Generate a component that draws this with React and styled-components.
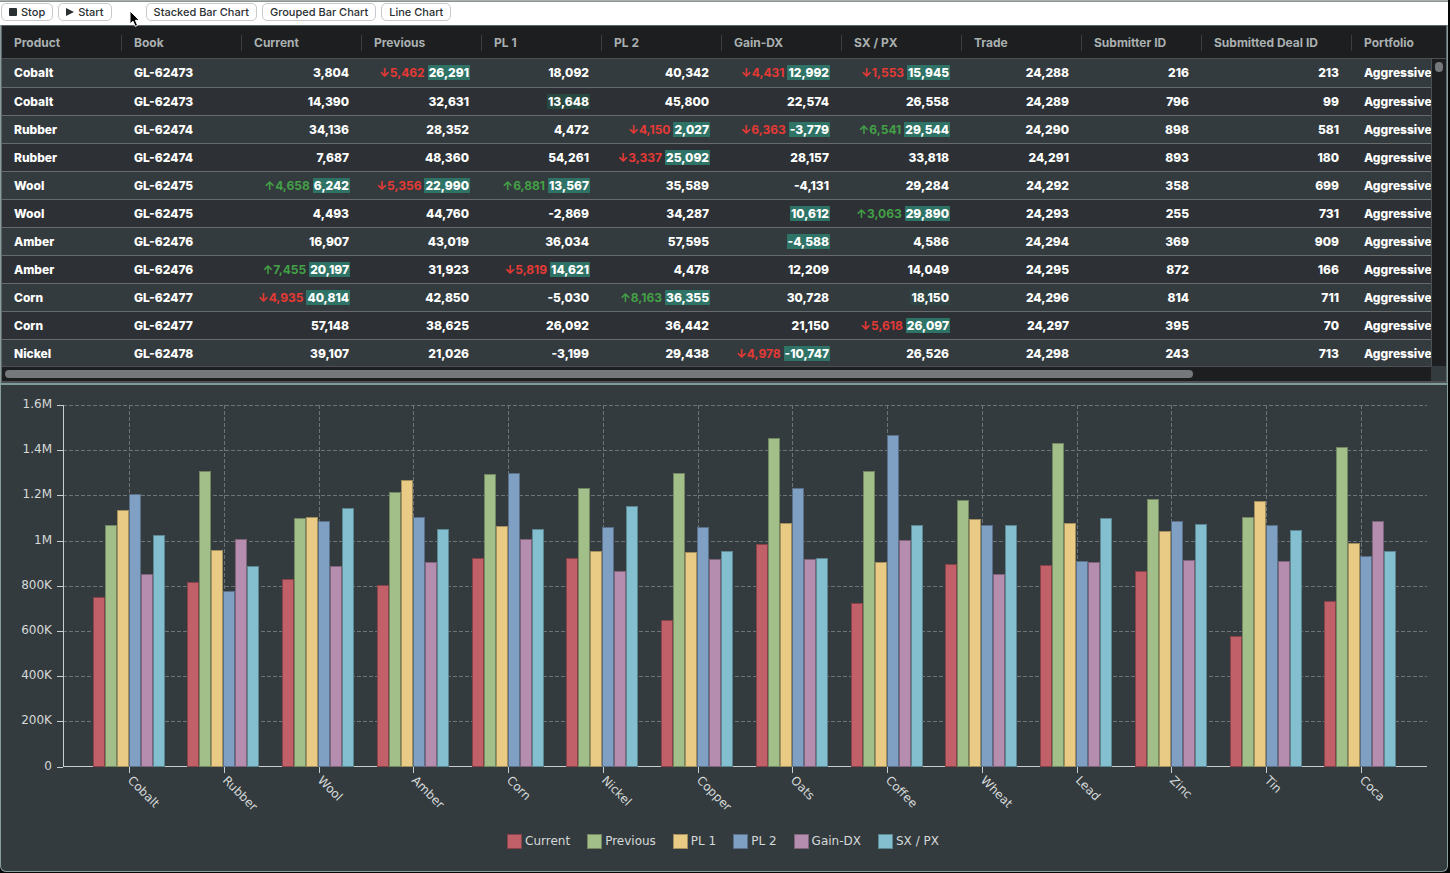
import React from 'react';
import styled, { createGlobalStyle } from 'styled-components';

const columns = [
  { name: 'Product', width: 120 },
  { name: 'Book', width: 120 },
  { name: 'Current', width: 120 },
  { name: 'Previous', width: 120 },
  { name: 'PL 1', width: 120 },
  { name: 'PL 2', width: 120 },
  { name: 'Gain-DX', width: 120 },
  { name: 'SX / PX', width: 120 },
  { name: 'Trade', width: 120 },
  { name: 'Submitter ID', width: 120 },
  { name: 'Submitted Deal ID', width: 150 },
  { name: 'Portfolio', width: 120 },
];

// A number cell is either a plain value or [value, delta, flash].
const rows = [
  ['Cobalt', 'GL-62473', 3804, [26291, -5462, 'on'], 18092, 40342, [12992, -4431, 'on'], [15945, -1553, 'on'], 24288, 216, 213],
  ['Cobalt', 'GL-62473', 14390, 32631, [13648, 0, 'fading'], 45800, 22574, 26558, 24289, 796, 99],
  ['Rubber', 'GL-62474', 34136, 28352, 4472, [2027, -4150, 'on'], [-3779, -6363, 'on'], [29544, 6541, 'on'], 24290, 898, 581],
  ['Rubber', 'GL-62474', 7687, 48360, 54261, [25092, -3337, 'on'], 28157, 33818, 24291, 893, 180],
  ['Wool', 'GL-62475', [6242, 4658, 'on'], [22990, -5356, 'on'], [13567, 6881, 'on'], 35589, -4131, 29284, 24292, 358, 699],
  ['Wool', 'GL-62475', 4493, 44760, -2869, 34287, [10612, 0, 'on'], [29890, 3063, 'on'], 24293, 255, 731],
  ['Amber', 'GL-62476', 16907, 43019, 36034, 57595, [-4588, 0, 'on'], 4586, 24294, 369, 909],
  ['Amber', 'GL-62476', [20197, 7455, 'on'], 31923, [14621, -5819, 'on'], 4478, 12209, 14049, 24295, 872, 166],
  ['Corn', 'GL-62477', [40814, -4935, 'on'], 42850, -5030, [36355, 8163, 'on'], 30728, [18150, 0, 'faded'], 24296, 814, 711],
  ['Corn', 'GL-62477', 57148, 38625, 26092, 36442, 21150, [26097, -5618, 'on'], 24297, 395, 70],
  ['Nickel', 'GL-62478', 39107, 21026, -3199, 29438, [-10747, -4978, 'on'], 26526, 24298, 243, 713],
];

const series = [
  { name: 'Current', fill: '#c16068', stroke: '#87434a' },
  { name: 'Previous', fill: '#a2bf8a', stroke: '#718661' },
  { name: 'PL 1', fill: '#e9cb85', stroke: '#a38e5d' },
  { name: 'PL 2', fill: '#80a0c3', stroke: '#5a7089' },
  { name: 'Gain-DX', fill: '#b58dae', stroke: '#7f637a' },
  { name: 'SX / PX', fill: '#84bfd0', stroke: '#5c8692' },
];

// Totals in thousands, in the order of the series.
const totals = [
  ['Cobalt', [753, 1073, 1139, 1210, 855, 1028]],
  ['Rubber', [820, 1312, 962, 780, 1010, 891]],
  ['Wool', [833, 1104, 1108, 1090, 891, 1148]],
  ['Amber', [807, 1219, 1272, 1108, 909, 1055]],
  ['Corn', [926, 1299, 1068, 1303, 1010, 1055]],
  ['Nickel', [926, 1237, 957, 1064, 869, 1157]],
  ['Copper', [652, 1303, 953, 1064, 922, 957]],
  ['Oats', [988, 1458, 1081, 1237, 922, 926]],
  ['Coffee', [727, 1312, 909, 1471, 1006, 1073]],
  ['Wheat', [900, 1183, 1099, 1073, 855, 1073]],
  ['Lead', [895, 1436, 1081, 913, 909, 1104]],
  ['Zinc', [869, 1188, 1046, 1090, 917, 1077]],
  ['Tin', [581, 1108, 1179, 1073, 913, 1050]],
  ['Coca', [736, 1418, 993, 935, 1090, 957]],
];

const yTicks = [
  [0, '0'],
  [200, '200K'],
  [400, '400K'],
  [600, '600K'],
  [800, '800K'],
  [1000, '1M'],
  [1200, '1.2M'],
  [1400, '1.4M'],
  [1600, '1.6M'],
];

const format = n => n.toLocaleString('en-US');

const NumberCell = ({ cell }) => {
  const [value, delta, flash] = Array.isArray(cell) ? cell : [cell, 0, 'off'];
  return (
    <Cell $right>
      {delta !== 0 && (
        <Delta $up={delta > 0}>
          {delta > 0 ? '↑' : '↓'}
          {format(Math.abs(delta))}
        </Delta>
      )}
      <Value $flash={flash}>{format(value)}</Value>
    </Cell>
  );
};

const Grid = () => (
  <GridPanel>
    <TableArea>
      <Table>
        <colgroup>
          {columns.map(c => <col key={c.name} style={{ width: c.width }} />)}
        </colgroup>
        <thead>
          <tr>
            {columns.map(c => (
              <HeaderCell key={c.name} scope="col">
                <HeaderLabel>{c.name}</HeaderLabel>
              </HeaderCell>
            ))}
          </tr>
        </thead>
        <tbody>
          {rows.map(([product, book, ...numbers]) => (
            <Row key={numbers[6]}>
              <Cell>{product}</Cell>
              <Cell>{book}</Cell>
              {numbers.map((n, i) => <NumberCell key={i} cell={n} />)}
              <Cell>Aggressive</Cell>
            </Row>
          ))}
        </tbody>
      </Table>
    </TableArea>
    <VerticalTrack><VerticalThumb /></VerticalTrack>
    <HorizontalTrack><HorizontalThumb /></HorizontalTrack>
  </GridPanel>
);

const LEFT = 62;
const RIGHT = 1426;
const BASE = 382;
const BAR = 12;
const EDGE = 66;
const STEP = 94.76;

const scaleY = v => BASE - 0.3 - (v * 361.7) / 1600;
const scaleX = i => LEFT + EDGE + i * STEP;
const yOf = v => Math.round(scaleY(v));
const xOf = i => Math.round(scaleX(i));

const BarChart = () => (
  <Plot viewBox="0 0 1446 440" role="img" aria-label="Totals by product">
    <g stroke="#6e7476" strokeDasharray="4 2" shapeRendering="crispEdges">
      {yTicks.slice(1).map(([v]) => (
        <line key={v} x1={LEFT} x2={RIGHT} y1={yOf(v) + 0.5} y2={yOf(v) + 0.5} />
      ))}
      {totals.map(([name], i) => (
        <line key={name} x1={xOf(i) + 0.5} x2={xOf(i) + 0.5} y1={yOf(1600)} y2={BASE} />
      ))}
    </g>
    <g stroke="#c9cdcd" shapeRendering="crispEdges">
      <line x1={LEFT + 0.5} x2={LEFT + 0.5} y1={yOf(1600)} y2={BASE} />
      <line x1={LEFT} x2={RIGHT} y1={BASE - 0.5} y2={BASE - 0.5} />
      {yTicks.map(([v]) => (
        <line key={v} x1={LEFT - 6} x2={LEFT} y1={yOf(v) + 0.5} y2={yOf(v) + 0.5} />
      ))}
      {totals.map(([name], i) => (
        <line key={name} x1={xOf(i) + 0.5} x2={xOf(i) + 0.5} y1={BASE} y2={BASE + 6} />
      ))}
    </g>
    {totals.map(([name, values], i) => (
      <g key={name} shapeRendering="crispEdges">
        {values.map((v, j) => {
          const top = Math.ceil(scaleY(v));
          return (
            <rect
              key={series[j].name}
              x={Math.floor(scaleX(i)) - 36 + j * BAR + 0.5}
              y={top + 0.5}
              width={BAR - 1}
              height={BASE - top - 1}
              fill={series[j].fill}
              stroke={series[j].stroke}
            />
          );
        })}
      </g>
    ))}
    {yTicks.map(([v, label]) => (
      <AxisLabel key={v} x={LEFT - 11} y={yOf(v) + 3} textAnchor="end">{label}</AxisLabel>
    ))}
    {totals.map(([name], i) => (
      <AxisLabel key={name} transform={`translate(${xOf(i) - 2} ${BASE + 14}) rotate(45)`}>{name}</AxisLabel>
    ))}
  </Plot>
);

const App = () => {
  return (
    <>
      <GlobalStyle />
      <Frame>
        <TitleEdge />
        <Toolbar>
          <ToolButton type="button">
            <Glyph viewBox="0 0 9 9" aria-hidden="true"><rect x="0" y="0" width="9" height="9" rx="1" /></Glyph>
            Stop
          </ToolButton>
          <ToolButton type="button">
            <Glyph viewBox="0 0 9 9" aria-hidden="true"><path d="M0 0 L9 4.5 L0 9 Z" /></Glyph>
            Start
          </ToolButton>
          <Spacer />
          <ToolButton type="button">Stacked Bar Chart</ToolButton>
          <ToolButton type="button">Grouped Bar Chart</ToolButton>
          <ToolButton type="button">Line Chart</ToolButton>
          <Pointer viewBox="0 0 12 18" aria-hidden="true">
            <path d="M1 1 V14 L4 11.2 L6.2 16.4 L8.6 15.4 L6.4 10.3 H10.4 Z" fill="#000" stroke="#fff" />
          </Pointer>
        </Toolbar>
        <Content>
          <Grid />
          <ChartPanel>
            <BarChart />
            <Legend>
              {series.map(s => (
                <LegendItem key={s.name}>
                  <Swatch $fill={s.fill} $stroke={s.stroke} />
                  {s.name}
                </LegendItem>
              ))}
            </Legend>
          </ChartPanel>
        </Content>
      </Frame>
    </>
  );
};

const GlobalStyle = createGlobalStyle`
  * {
    box-sizing: border-box;
  }

  body {
    margin: 0;
    background: #050707;
    font-family: Inter, "Liberation Sans", sans-serif;
  }
`;

const Frame = styled.div`
  display: flex;
  flex-direction: column;
  min-height: calc(100vh - 1px);
  margin-right: 2px;
`;

const TitleEdge = styled.div`
  height: 2px;
  background: #aab0ab;
  border-bottom: 1px solid #8e9390;
`;

const Toolbar = styled.div`
  position: relative;
  display: flex;
  align-items: flex-start;
  gap: 5px;
  height: 23px;
  padding: 1px;
  background: #fff;
`;

const ToolButton = styled.button`
  display: flex;
  align-items: center;
  gap: 4px;
  height: 18px;
  padding: 0 7px;
  border: 1px solid #c6caca;
  border-radius: 5px;
  background: #fff;
  color: #2b3033;
  font-family: inherit;
  font-size: 11px;
  font-weight: 500;
  line-height: 16px;
  white-space: nowrap;
`;

const Glyph = styled.svg`
  width: 8px;
  height: 8px;
  fill: #2b3033;
`;

const Spacer = styled.div`
  width: 24px;
`;

const Pointer = styled.svg`
  position: absolute;
  left: 129px;
  top: 8px;
  width: 12px;
  height: 18px;
  z-index: 1;
`;

const Content = styled.div`
  display: flex;
  flex-direction: column;
  flex: 1;
  border: solid #8a9c9c;
  border-width: 0 1px 1px;
  border-radius: 0 0 6px 6px;
  background: #343b3e;
  overflow: hidden;
`;

const GridPanel = styled.section`
  display: grid;
  grid-template-columns: 1fr 15px;
  grid-template-rows: 33px 307px 15px;
  border: 1px solid #5c6769;
  border-bottom: 2px solid #4c5053;
`;

const TableArea = styled.div`
  grid-area: 1 / 1 / 3 / 3;
  overflow: hidden;
  background: #1c1e20;
`;

const Table = styled.table`
  width: 1470px;
  table-layout: fixed;
  border-collapse: separate;
  border-spacing: 0;
  font-size: 12px;
  line-height: 15px;
`;

const HeaderCell = styled.th`
  height: 33px;
  padding: 2px 0 0;
  border-bottom: 1px solid #4c5053;
  background: #1c1e20;
  color: #aab0b0;
  font-weight: 700;
  text-align: left;
`;

const HeaderLabel = styled.div`
  height: 16px;
  padding-left: 12px;
  border-right: 1px solid #3a3e41;
  line-height: 16px;
`;

const Cell = styled.td`
  padding: 0 12px;
  border-bottom: 1px solid #676b6e;
  color: #fff;
  font-weight: 800;
  text-align: ${props => (props.$right ? 'right' : 'left')};
  white-space: nowrap;
`;

const Row = styled.tr`
  background: #2d3135;
  height: 28px;

  &:nth-child(odd) {
    background: #343b3e;
  }

  &:first-child {
    height: 29px;
  }

  &:first-child ${Cell} {
    padding-bottom: 2px;
  }
`;

const Delta = styled.span`
  margin-right: 3px;
  color: ${props => (props.$up ? '#43a047' : '#e53935')};
  font-weight: 700;
`;

const flashColors = {
  on: '#2f7366',
  fading: '#284840',
  faded: '#304644',
  off: 'transparent',
};

const Value = styled.span`
  display: inline-block;
  padding: 0 1px;
  background: ${props => flashColors[props.$flash]};
`;

const VerticalTrack = styled.div`
  grid-area: 2 / 2;
  z-index: 1;
  padding: 3px;
  border-left: 1px solid #4c5053;
  background: #1c1e20;
`;

const VerticalThumb = styled.div`
  width: 8px;
  height: 10px;
  border-radius: 4px;
  background: #75797b;
`;

const HorizontalTrack = styled.div`
  grid-area: 3 / 1;
  padding: 3px;
  border-top: 1px solid #4c5053;
  background: #1c1e20;
`;

const HorizontalThumb = styled.div`
  width: 83.5%;
  height: 8px;
  border-radius: 4px;
  background: #75797b;
`;

const ChartPanel = styled.section`
  flex: 1;
  border-top: 2px solid #7f9a9a;
`;

const Plot = styled.svg`
  display: block;
  width: 100%;
`;

const AxisLabel = styled.text`
  fill: #d5d9d9;
  font-family: "DejaVu Sans", sans-serif;
  font-size: 12px;
`;

const Legend = styled.ul`
  display: flex;
  justify-content: center;
  gap: 17px;
  margin: 0;
  padding: 9px 2px 15px 0;
  color: #d5d9d9;
  font-family: "DejaVu Sans", sans-serif;
  font-size: 12px;
  line-height: 15px;
  list-style: none;
`;

const LegendItem = styled.li`
  display: flex;
  align-items: center;
  gap: 3px;
`;

const Swatch = styled.span`
  width: 15px;
  height: 15px;
  border: 1px solid ${props => props.$stroke};
  background: ${props => props.$fill};
`;

export default App;
